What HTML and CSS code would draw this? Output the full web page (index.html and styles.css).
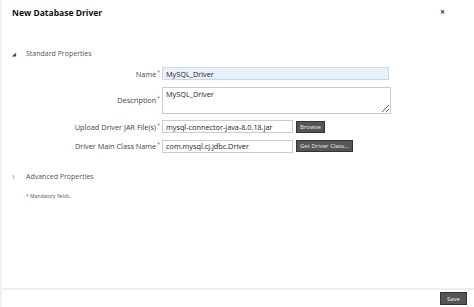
FILE: index.html
```html
<!DOCTYPE html>
<html lang="en">
<head>
    <meta charset="UTF-8">
    <title>New Database Driver</title>
    <link rel="stylesheet" href="styles.css">
</head>
<body>
    <div class="dialog">
        <div class="dialog-header">
            <span class="dialog-title">New Database Driver</span>
            <span class="dialog-close">&#x2715;</span>
        </div>

        <div class="dialog-body">
            <div class="section-head">
                <span class="arrow open">&#9698;</span>
                <span>Standard Properties</span>
            </div>

            <div class="form">
                <div class="row">
                    <label>Name<span class="req">*</span></label>
                    <input class="field field-wide filled" type="text" value="MySQL_Driver">
                </div>
                <div class="row row-top">
                    <label class="label-mid">Description<span class="req">*</span></label>
                    <textarea class="field field-area">MySQL_Driver</textarea>
                </div>
                <div class="row">
                    <label>Upload Driver JAR File(s)<span class="req">*</span></label>
                    <input class="field field-short" type="text" value="mysql-connector-java-8.0.18.jar">
                    <button class="btn">Browse</button>
                </div>
                <div class="row">
                    <label>Driver Main Class Name<span class="req">*</span></label>
                    <input class="field field-short" type="text" value="com.mysql.cj.jdbc.Driver">
                    <button class="btn">Get Driver Class...</button>
                </div>
            </div>

            <div class="section-head section-closed">
                <span class="arrow">&#8250;</span>
                <span>Advanced Properties</span>
            </div>

            <p class="note"><span class="req">*</span> Mandatory fields.</p>
        </div>

        <div class="dialog-footer">
            <button class="btn btn-save">Save</button>
        </div>
    </div>
</body>
</html>
```

FILE: styles.css
```css
body {
    margin: 0;
    background: #fff;
    font-family: "Open Sans", sans-serif;
    color: #333;
}

.dialog {
    width: 474px;
    height: 307px;
    box-sizing: border-box;
    border-left: 2px solid #f0f0f0;
    display: flex;
    flex-direction: column;
}

.dialog-header {
    display: flex;
    justify-content: space-between;
    align-items: center;
    padding: 6px 29px 0 10px;
    height: 12px;
}

.dialog-title {
    font-size: 8.5px;
    font-weight: bold;
    color: #111;
}

.dialog-close {
    font-size: 6px;
    font-weight: bold;
    color: #222;
}

.dialog-body {
    flex: 1;
    padding: 0 0 0 10px;
}

.section-head {
    display: flex;
    align-items: center;
    gap: 8px;
    font-size: 7px;
    color: #555;
    margin-top: 31px;
}

.section-head .arrow {
    width: 6px;
    font-size: 5px;
    color: #333;
}

.section-closed {
    margin-top: 19px;
}

.section-closed .arrow {
    font-size: 10px;
    color: #aaa;
    line-height: 8px;
}

.form {
    display: flex;
    flex-direction: column;
    gap: 6.5px;
    margin-top: 9px;
}

.row {
    display: flex;
    align-items: center;
}

.row-top {
    align-items: stretch;
}

.row label {
    width: 148px;
    text-align: right;
    font-size: 7.3px;
    color: #444;
    padding-right: 2px;
}

.row .label-mid {
    align-self: center;
}

.req {
    color: #d33;
    font-size: 5px;
    vertical-align: top;
    margin-left: 1px;
}

.field {
    box-sizing: border-box;
    border: 1px solid #ccc;
    font-family: "Open Sans", sans-serif;
    font-size: 7.3px;
    color: #222;
    padding: 0 3px;
    margin: 0;
    height: 13px;
    outline: none;
}

.field-wide {
    width: 227px;
}

.filled {
    background: #e8f0fb;
    border-color: #c9d6e8;
}

.field-area {
    width: 229px;
    height: 27px;
    resize: vertical;
    padding-top: 1px;
}

.field-short {
    width: 131px;
}

.btn {
    background: #555;
    color: #eee;
    border: 1px solid #333;
    font-family: "Open Sans", sans-serif;
    font-size: 6px;
    height: 12px;
    padding: 0 3px;
    margin-left: 3px;
    cursor: pointer;
}

.note {
    font-size: 5px;
    color: #555;
    margin: 12px 0 0 13px;
}

.dialog-footer {
    border-top: 2px solid #eee;
    display: flex;
    justify-content: flex-end;
    padding: 2px 7px 2px 0;
}

.btn-save {
    width: 27px;
    height: 13px;
    margin: 0;
}
```
